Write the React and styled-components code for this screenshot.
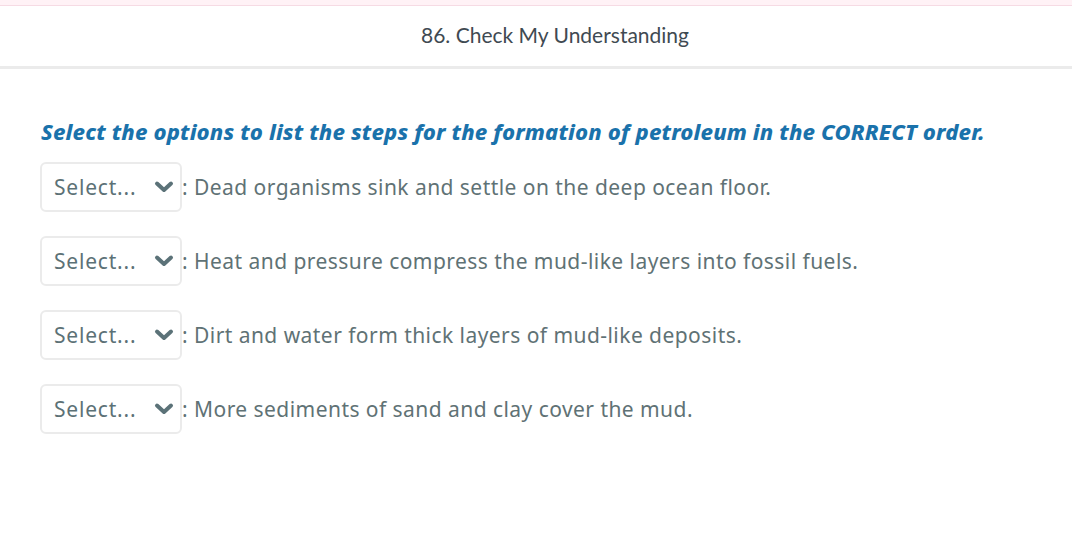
import React from "react";
import styled, { createGlobalStyle } from "styled-components";

const GlobalStyle = createGlobalStyle`
  html, body {
    margin: 0;
    padding: 0;
    background: #ffffff;
  }
  body {
    font-family: "Noto Sans", sans-serif;
  }
`;

const steps = [
  "Dead organisms sink and settle on the deep ocean floor.",
  "Heat and pressure compress the mud-like layers into fossil fuels.",
  "Dirt and water form thick layers of mud-like deposits.",
  "More sediments of sand and clay cover the mud.",
];

const Page = styled.div`
  width: 1072px;
  height: 541px;
  overflow: hidden;
  background: #fff;
`;

const TopStrip = styled.div`
  height: 5px;
  background: #fff2f6;
  border-bottom: 1px solid #f6dbe4;
`;

const Header = styled.header`
  height: 63px;
  box-sizing: border-box;
  padding: 0 0 4px 38px;
  display: flex;
  align-items: center;
  justify-content: center;
  border-bottom: 3px solid #ebebeb;
  font-family: Lato, sans-serif;
  font-size: 21px;
  color: #3f4a52;
`;

const Body = styled.main`
  padding: 48px 40px 0;
`;

const Prompt = styled.h2`
  margin: 0 0 17px 1px;
  line-height: 28px;
  font-family: "Noto Sans", sans-serif;
  font-size: 22px;
  font-weight: 800;
  font-style: italic;
  color: #1a72ab;
  letter-spacing: 0.14px;
  white-space: nowrap;
`;

const List = styled.div`
  display: flex;
  flex-direction: column;
  gap: 24px;
`;

const Row = styled.div`
  display: flex;
  align-items: center;
  height: 50px;
`;

const SelectBox = styled.div`
  box-sizing: border-box;
  width: 142px;
  height: 50px;
  border: 2px solid #ebebeb;
  border-radius: 6px;
  display: flex;
  align-items: center;
  justify-content: space-between;
  padding: 0 6px 0 12px;
  font-family: "Noto Sans", sans-serif;
  font-size: 21px;
  color: #5c7176;
  letter-spacing: 0.8px;
`;

const Chevron = () => (
  <svg width="20" height="14" viewBox="0 0 20 14">
    <path d="M3 3.5 L10 10 L17 3.5" fill="none" stroke="#5b7278" strokeWidth="4" strokeLinecap="round" strokeLinejoin="round" />
  </svg>
);

const StepText = styled.span`
  margin-left: 0;
  font-family: "Noto Sans", sans-serif;
  font-size: 21px;
  color: #5f7275;
  letter-spacing: 0.45px;
  padding-bottom: 1px;
`;

export default function App() {
  return (
    <Page>
      <GlobalStyle />
      <TopStrip />
      <Header>86. Check My Understanding</Header>
      <Body>
        <Prompt>Select the options to list the steps for the formation of petroleum in the CORRECT order.</Prompt>
        <List>
          {steps.map((s) => (
            <Row key={s}>
              <SelectBox>
                <span>Select...</span>
                <Chevron />
              </SelectBox>
              <StepText>: {s}</StepText>
            </Row>
          ))}
        </List>
      </Body>
    </Page>
  );
}
